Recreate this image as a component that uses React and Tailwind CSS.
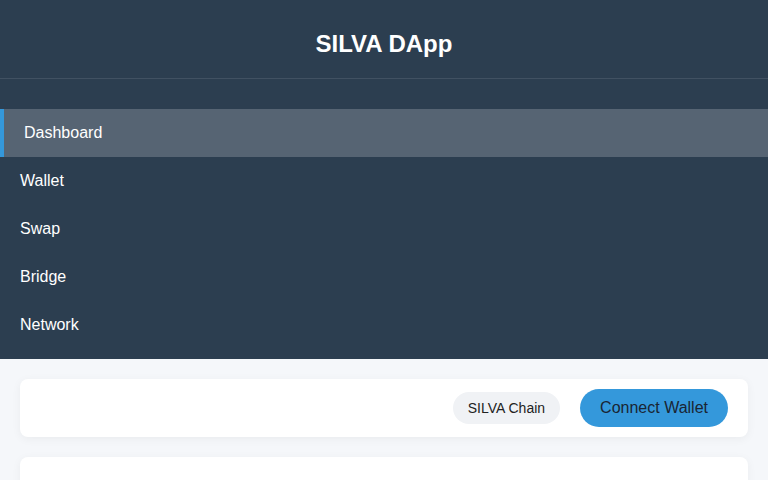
import React from 'react'

const navItems = ['Dashboard', 'Wallet', 'Swap', 'Bridge', 'Network']

function Sidebar() {
  return (
    <aside className="bg-[#2c3e50] text-white">
      <div className="h-[79px] pt-[10px] flex items-center justify-center border-b border-white/10">
        <h1 className="text-[24px] font-bold leading-none">SILVA DApp</h1>
      </div>
      <nav className="pt-[30px] pb-[10px]">
        {navItems.map((item, i) => (
          <div
            key={item}
            className={
              i === 0
                ? 'h-12 flex items-center pl-5 border-l-4 border-[#3498db] bg-white/20 text-[16px]'
                : 'h-12 flex items-center px-5 text-[16px]'
            }
          >
            {item}
          </div>
        ))}
      </nav>
    </aside>
  )
}

export default function App() {
  return (
    <div className="min-h-[480px] bg-[#f5f7fa] font-['Liberation_Sans',Arial,sans-serif]">
      <Sidebar />
      <main className="p-5 flex flex-col gap-5">
        <div className="bg-white rounded-lg shadow-[0_2px_10px_rgba(0,0,0,0.05)] px-5 py-[10px] flex items-center justify-end gap-5">
          <span className="h-8 px-[15px] flex items-center rounded-full bg-[#f0f2f5] text-[14px] text-[#222]">
            SILVA Chain
          </span>
          <button className="h-[38px] px-5 rounded-full bg-[#3498db] text-[16px] text-[#1a2533]">
            Connect Wallet
          </button>
        </div>
        <div className="bg-white rounded-lg shadow-[0_2px_10px_rgba(0,0,0,0.05)] h-[200px]"></div>
      </main>
    </div>
  )
}
